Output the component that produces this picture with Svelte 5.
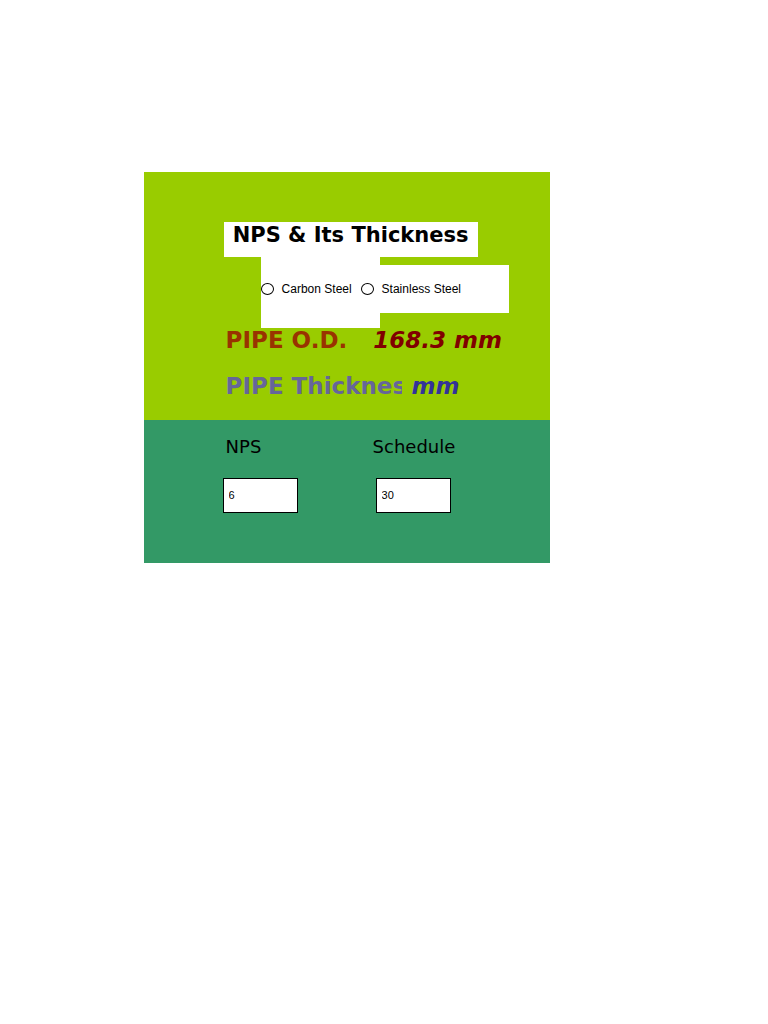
<script>
  let material = $state('');
  let nps = $state('6');
  let schedule = $state('30');
</script>

<main>
  <form class="calculator" onsubmit={(event) => event.preventDefault()}>
    <section class="results">
      <h1>NPS &amp; Its Thickness</h1>
      <div class="materials" role="radiogroup" aria-label="Material">
        <label class="carbon">
          <input type="radio" name="material" value="carbon" bind:group={material} />
          <span>Carbon Steel</span>
        </label>
        <label class="stainless">
          <input type="radio" name="material" value="stainless" bind:group={material} />
          <span>Stainless Steel</span>
        </label>
      </div>
      <div class="result diameter">
        <span class="name">PIPE O.D.</span>
        <output>168.3 mm</output>
      </div>
      <div class="result thickness">
        <span class="name">PIPE Thickness</span>
        <output>mm</output>
      </div>
    </section>
    <section class="sizes">
      <div class="field">
        <label for="nps">NPS</label>
        <input id="nps" type="text" bind:value={nps} />
      </div>
      <div class="field schedule">
        <label for="schedule">Schedule</label>
        <input id="schedule" type="text" bind:value={schedule} />
      </div>
    </section>
  </form>
</main>

<style>
  :global(body) {
    margin: 0;
    background: #fff;
  }
  main {
    padding: 172px 0 40px 18.7%;
    font-family: "DejaVu Sans", Verdana, sans-serif;
    color: #000;
  }
  .calculator {
    width: 65.1%;
    min-width: 400px;
  }
  .results {
    box-sizing: border-box;
    padding: 50px 40px 22px 80px;
    background: #9c0;
  }
  h1 {
    box-sizing: border-box;
    width: 254px;
    margin: 0;
    padding: 0 0 8px;
    background: #fff;
    font-size: 21px;
    line-height: 27px;
    text-align: center;
    white-space: nowrap;
  }
  .materials {
    display: flex;
    align-items: flex-start;
    margin-left: 37px;
    font-family: "Liberation Sans", Arial, sans-serif;
    font-size: 12px;
  }
  .materials label {
    display: flex;
    align-items: center;
    gap: 8px;
    box-sizing: border-box;
    background: #fff;
    white-space: nowrap;
  }
  .carbon {
    width: 119px;
    height: 71px;
    margin-right: -19px;
    padding-bottom: 8px;
  }
  .stainless {
    width: 148px;
    height: 48px;
    margin-top: 8px;
  }
  input[type="radio"] {
    flex: none;
    appearance: none;
    box-sizing: border-box;
    width: 13px;
    height: 12px;
    margin: 0;
    border: 1px solid #000;
    border-radius: 50%;
    background: #fff;
  }
  input[type="radio"]:checked {
    background: #000;
    box-shadow: inset 0 0 0 2px #fff;
  }
  .result {
    display: flex;
    align-items: center;
    padding-left: 2px;
    height: 24px;
    font-size: 23px;
    font-weight: bold;
    line-height: 24px;
    white-space: nowrap;
  }
  .name {
    overflow: hidden;
  }
  output {
    font-style: italic;
  }
  .diameter {
    gap: 26px;
    color: #930;
  }
  .diameter output {
    color: #800000;
  }
  .thickness {
    gap: 10px;
    margin-top: 22px;
    color: #669;
  }
  .thickness .name {
    width: 176px;
  }
  .thickness output {
    color: #339;
  }
  .sizes {
    display: flex;
    gap: 78px;
    padding: 16px 40px 50px 79px;
    background: #396;
  }
  .field {
    display: flex;
    flex-direction: column;
    gap: 20px;
    width: 75px;
  }
  .field label {
    padding-left: 3px;
    font-size: 18px;
    line-height: 22px;
  }
  .schedule label {
    padding-left: 0;
    margin-left: -3px;
  }
  .field input {
    box-sizing: border-box;
    width: 100%;
    height: 35px;
    padding: 0 5px 2px;
    border: 1px solid #000;
    border-radius: 0;
    background: #fff;
    color: #000;
    font-family: "Liberation Sans", Arial, sans-serif;
    font-size: 11px;
  }
</style>
